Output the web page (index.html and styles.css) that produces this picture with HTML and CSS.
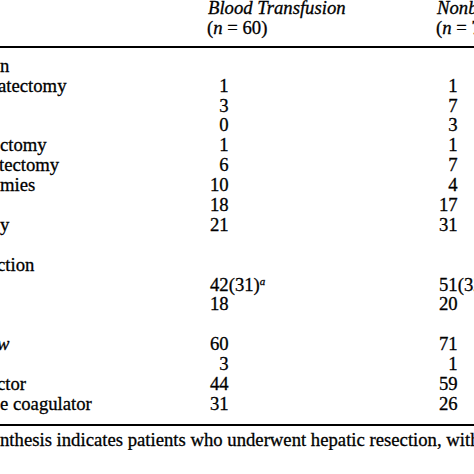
FILE: index.html
```html
<!DOCTYPE html>
<html lang="en">
<head>
<meta charset="utf-8">
<title>Table</title>
<link rel="stylesheet" href="styles.css">
</head>
<body>
<div class="page">
  <div class="head">
    <div class="row">
      <div class="lab"></div>
      <div class="hcell"><i>Blood Transfusion</i></div>
      <div class="hcell"><i>Nonblood Transfusion</i></div>
    </div>
    <div class="row">
      <div class="lab"></div>
      <div class="hcell hn">(<i>n</i> = 60)</div>
      <div class="hcell hn">(<i>n</i> = 71)</div>
    </div>
  </div>
  <div class="rule"></div>
  <div class="body">
    <div class="row"><div class="lab">n</div><div class="c1"></div><div class="c2"></div></div>
    <div class="row"><div class="lab sh2">atectomy</div><div class="c1"><span class="num">1</span></div><div class="c2"><span class="num">1</span></div></div>
    <div class="row"><div class="lab"></div><div class="c1"><span class="num">3</span></div><div class="c2"><span class="num">7</span></div></div>
    <div class="row"><div class="lab"></div><div class="c1"><span class="num">0</span></div><div class="c2"><span class="num">3</span></div></div>
    <div class="row"><div class="lab">ctomy</div><div class="c1"><span class="num">1</span></div><div class="c2"><span class="num">1</span></div></div>
    <div class="row"><div class="lab sh1">tectomy</div><div class="c1"><span class="num">6</span></div><div class="c2"><span class="num">7</span></div></div>
    <div class="row"><div class="lab">mies</div><div class="c1"><span class="num">10</span></div><div class="c2"><span class="num">4</span></div></div>
    <div class="row"><div class="lab"></div><div class="c1"><span class="num">18</span></div><div class="c2"><span class="num">17</span></div></div>
    <div class="row"><div class="lab">y</div><div class="c1"><span class="num">21</span></div><div class="c2"><span class="num">31</span></div></div>
    <div class="row"><div class="lab"></div><div class="c1"></div><div class="c2"></div></div>
    <div class="row"><div class="lab sh3">ction</div><div class="c1"></div><div class="c2"></div></div>
    <div class="row"><div class="lab"></div><div class="c1"><span class="num wide">42(31)<sup class="fn">a</sup></span></div><div class="c2"><span class="num wide">51(32)<sup class="fn">a</sup></span></div></div>
    <div class="row"><div class="lab"></div><div class="c1"><span class="num">18</span></div><div class="c2"><span class="num">20</span></div></div>
    <div class="row"><div class="lab"></div><div class="c1"></div><div class="c2"></div></div>
    <div class="row"><div class="lab sh3"><i>w</i></div><div class="c1"><span class="num">60</span></div><div class="c2"><span class="num">71</span></div></div>
    <div class="row"><div class="lab"></div><div class="c1"><span class="num">3</span></div><div class="c2"><span class="num">1</span></div></div>
    <div class="row"><div class="lab sh3">ctor</div><div class="c1"><span class="num">44</span></div><div class="c2"><span class="num">59</span></div></div>
    <div class="row"><div class="lab">e coagulator</div><div class="c1"><span class="num">31</span></div><div class="c2"><span class="num">26</span></div></div>
  </div>
  <div class="rule rule-bottom"></div>
  <p class="note">nthesis indicates patients who underwent hepatic resection, without</p>
</div>
</body>
</html>
```

FILE: styles.css
```css
html, body {
  margin: 0;
  padding: 0;
  background: #fff;
  overflow: hidden;
}
body {
  width: 474px;
  height: 474px;
  font-family: "Liberation Serif", "Times New Roman", serif;
  font-size: 18.7px;
  color: #000;
  -webkit-text-stroke: 0.3px #000;
}
.page {
  width: 474px;
  overflow: hidden;
}
.head {
  margin-top: -2px;
}
.row {
  display: grid;
  grid-template-columns: 207px 229px 1fr;
  height: 19.9px;
  line-height: 19.9px;
  white-space: nowrap;
}
.lab {
  overflow: visible;
}
.sh1 { margin-left: -1px; }
.sh2 { margin-left: -2px; }
.sh3 { margin-left: -3px; }
.hcell {
  padding-left: 1px;
}
.hn {
  padding-left: 0;
}
.c1, .c2 {
  padding-left: 3px;
}
.num {
  display: inline-block;
  width: 1em;
  text-align: right;
}
.num.wide {
  text-align: left;
}
.fn {
  font-style: italic;
  font-size: 11px;
  line-height: 0;
  vertical-align: 6px;
}
.rule {
  height: 2px;
  background: #000;
  margin-top: 8px;
  margin-bottom: 8px;
}
.rule-bottom {
  margin-top: 10px;
  margin-bottom: 4px;
}
.note {
  margin: 0;
  line-height: 19.9px;
  white-space: nowrap;
}
```
